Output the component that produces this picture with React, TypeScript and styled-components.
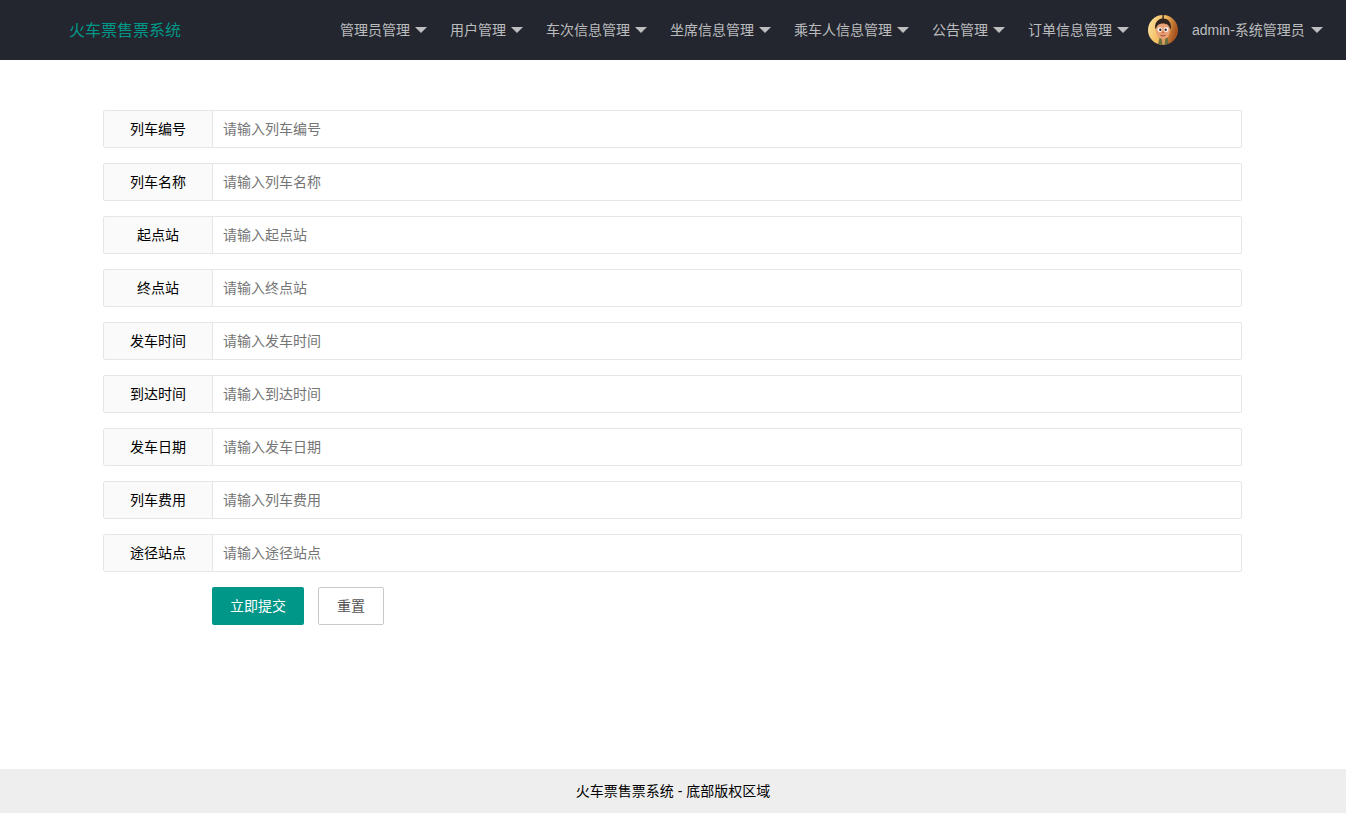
import styled, { createGlobalStyle } from 'styled-components'

const menus = ['管理员管理', '用户管理', '车次信息管理', '坐席信息管理', '乘车人信息管理', '公告管理', '订单信息管理']

const fields = ['列车编号', '列车名称', '起点站', '终点站', '发车时间', '到达时间', '发车日期', '列车费用', '途径站点']

export default function App() {
  return (
    <Page>
      <GlobalStyle />
      <Header>
        <Brand>火车票售票系统</Brand>
        <Nav>
          {menus.map((menu) => (
            <NavItem key={menu}>
              {menu}
              <Caret />
            </NavItem>
          ))}
          <UserItem>
            <Avatar />
            <UserName>admin-系统管理员</UserName>
            <Caret />
          </UserItem>
        </Nav>
      </Header>
      <Main>
        <Form onSubmit={(e) => e.preventDefault()}>
          {fields.map((field) => (
            <Row key={field}>
              <Label>{field}</Label>
              <Input type="text" placeholder={`请输入${field}`} />
            </Row>
          ))}
          <Actions>
            <SubmitButton type="submit">立即提交</SubmitButton>
            <ResetButton type="reset">重置</ResetButton>
          </Actions>
        </Form>
      </Main>
      <Footer>火车票售票系统 - 底部版权区域</Footer>
    </Page>
  )
}

function Avatar() {
  return (
    <AvatarIcon viewBox="0 0 30 30">
      <defs>
        <linearGradient id="avatar-bg" x1="0" y1="0" x2="1" y2="0.3">
          <stop offset="0" stopColor="#fbe6a4" />
          <stop offset="0.55" stopColor="#f3b95e" />
          <stop offset="1" stopColor="#a9551f" />
        </linearGradient>
        <clipPath id="avatar-clip">
          <circle cx="15" cy="15" r="15" />
        </clipPath>
      </defs>
      <g clipPath="url(#avatar-clip)">
        <rect width="30" height="30" fill="url(#avatar-bg)" />
        <path d="M10 30 L11.5 23 H19.5 L21 30 Z" fill="#66703f" />
        <path d="M13.5 23 H17.5 L16.5 30 H14.5 Z" fill="#dd9c5e" />
        <path d="M7 13 C7 6 11 3.5 15 3.5 C19.5 3.5 23 6.5 23 13 L21 15 H9 Z" fill="#2f2420" />
        <path d="M14.4 0 H15.8 V4.5 H14.4 Z" fill="#2f2420" />
        <path d="M8 15 C8 10.5 11 8.5 15 8.5 C19 8.5 22 10.5 22 15 C22 20 19 24 15 24 C11 24 8 20 8 15 Z" fill="#e9a176" />
        <circle cx="11.9" cy="14.6" r="2.4" fill="#fff" />
        <circle cx="18.1" cy="14.6" r="2.4" fill="#fff" />
        <circle cx="12.3" cy="14.8" r="1.2" fill="#3b2418" />
        <circle cx="17.7" cy="14.8" r="1.2" fill="#3b2418" />
        <ellipse cx="15" cy="17.6" rx="1.4" ry="1" fill="#cf7550" />
        <path d="M12.5 20.2 Q15 21.8 17.5 20.2" stroke="#9c4630" strokeWidth="1" fill="none" />
      </g>
    </AvatarIcon>
  )
}

const GlobalStyle = createGlobalStyle`
  * {
    box-sizing: border-box;
  }
  body {
    margin: 0;
    font-family: "Liberation Sans", "Noto Sans CJK SC", sans-serif;
    font-size: 14px;
    color: #000;
    background: #fff;
  }
`

const Page = styled.div`
  min-height: 813px;
  display: flex;
  flex-direction: column;
`

const Header = styled.header`
  height: 60px;
  background-color: #23262e;
  display: flex;
  align-items: center;
  justify-content: space-between;
  padding-left: 69px;
  padding-right: 23px;
`

const Brand = styled.div`
  font-size: 16px;
  color: #009688;
  padding-bottom: 2px;
`

const Nav = styled.nav`
  display: flex;
  align-items: center;
  height: 100%;
`

const NavItem = styled.div`
  display: flex;
  align-items: center;
  height: 100%;
  padding: 0 3px 2px 20px;
  font-size: 14px;
  color: rgba(255, 255, 255, 0.7);
  white-space: nowrap;
  cursor: pointer;
`

const UserItem = styled(NavItem)`
  padding: 0 0 2px;
  margin-left: 16px;
`

const UserName = styled.span`
  width: 114px;
`

const Caret = styled.span`
  width: 0;
  height: 0;
  margin-left: 5px;
  margin-top: 2px;
  border-style: solid;
  border-width: 6px 6px 0;
  border-color: rgba(255, 255, 255, 0.7) transparent transparent;
`

const AvatarIcon = styled.svg`
  width: 30px;
  height: 30px;
  margin-top: 2px;
  margin-right: 14px;
  flex-shrink: 0;
`

const Main = styled.main`
  flex: 1;
  padding: 50px 104px 0 103px;
`

const Form = styled.form`
  display: flex;
  flex-direction: column;
  gap: 15px;
`

const Row = styled.div`
  display: flex;
  height: 38px;
`

const Label = styled.label`
  width: 110px;
  flex-shrink: 0;
  display: flex;
  align-items: center;
  justify-content: center;
  padding-bottom: 2px;
  background-color: #fafafa;
  border: 1px solid #e6e6e6;
  border-radius: 2px 0 0 2px;
`

const Input = styled.input`
  flex: 1;
  min-width: 0;
  height: 38px;
  margin-left: -1px;
  padding: 0 10px;
  background: #fff;
  border: 1px solid #e6e6e6;
  border-radius: 0 2px 2px 0;
  font: inherit;
  color: #000;
  outline: none;
  &::placeholder {
    color: #757575;
  }
`

const Actions = styled.div`
  display: flex;
  gap: 14px;
  padding-left: 109px;
`

const SubmitButton = styled.button`
  height: 38px;
  padding: 0 18px 2px;
  background-color: #009688;
  border: none;
  border-radius: 2px;
  font: inherit;
  color: #fff;
  cursor: pointer;
`

const ResetButton = styled.button`
  height: 38px;
  padding: 0 18px 2px;
  background-color: #fff;
  border: 1px solid #c9c9c9;
  border-radius: 2px;
  font: inherit;
  color: #555;
  cursor: pointer;
`

const Footer = styled.footer`
  height: 44px;
  display: flex;
  align-items: center;
  justify-content: center;
  padding-bottom: 2px;
  background-color: #eee;
`
